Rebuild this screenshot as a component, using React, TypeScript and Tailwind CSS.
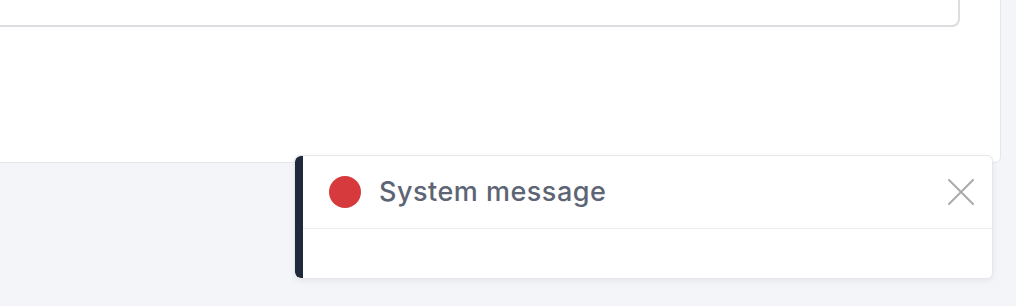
import React from "react";

export default function App() {
  return (
    <div className="relative h-[306px] w-[1016px] overflow-hidden bg-[#f4f5f9]" style={{ fontFamily: "Inter, 'Noto Sans', sans-serif" }}>
      <div className="pr-[15px]">
        <div className="-ml-[12px] -mt-[12px] h-[175px] rounded-br-[6px] border border-[#e4e6eb] bg-white pr-[40px]">
          <div className="h-[38px] rounded-br-[8px] border-2 border-t-0 border-l-0 border-[#dcdce1] bg-white" />
        </div>
      </div>

      <div className="absolute left-[294px] top-[155px] flex h-[124px] w-[699px] overflow-hidden rounded-[6px] border border-[#e6e7eb] bg-white shadow-[0_2px_6px_rgba(0,0,0,0.06)]">
        <div className="w-[8px] shrink-0 rounded-l-[6px] bg-[#1e293b]" />
        <div className="flex flex-1 flex-col">
          <div className="flex h-[73px] items-center border-b border-[#ececee] pl-[26px] pr-[18px]">
            <div className="h-[32px] w-[32px] rounded-full bg-[#d63a3c]" />
            <span className="ml-[18px] text-[27px] font-medium tracking-[0.5px] text-[#5d6575]">System message</span>
            <div className="ml-auto flex h-[26px] w-[26px] items-center justify-center">
              <svg width="26" height="26" viewBox="0 0 26 26" fill="none" stroke="#ababab" strokeWidth="2" strokeLinecap="round">
                <path d="M1 1L25 25M25 1L1 25" />
              </svg>
            </div>
          </div>
          <div className="flex-1" />
        </div>
      </div>
    </div>
  );
}
